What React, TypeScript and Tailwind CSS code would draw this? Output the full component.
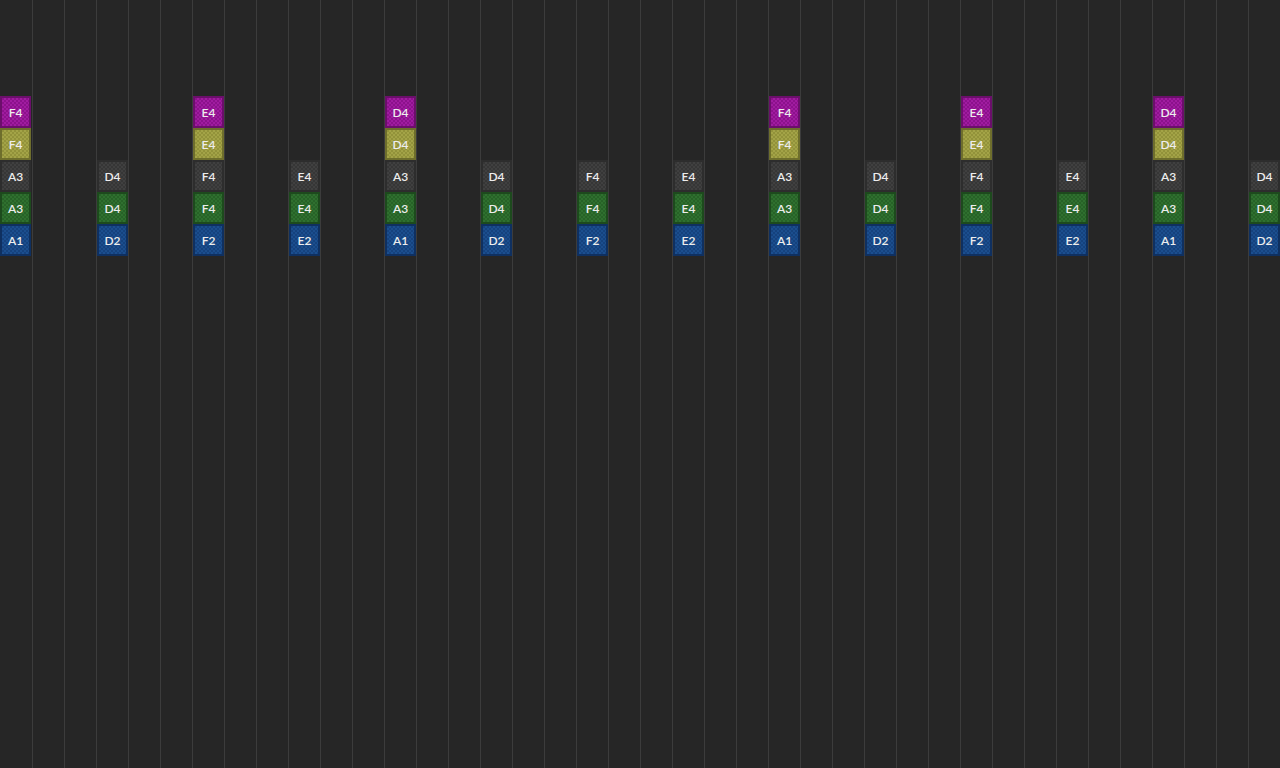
import React from "react";

type Note = { pitch: string; tone: keyof typeof TONES };

const TONES = {
  lead: "border-[#6b0f6b] bg-[repeating-conic-gradient(#a01ca0_0_25%,#8c118c_0_50%)]",
  pad: "border-[#6e6e2c] bg-[repeating-conic-gradient(#a3a347_0_25%,#92923a_0_50%)]",
  mid: "border-[#2d2d2d] bg-[repeating-conic-gradient(#404040_0_25%,#363636_0_50%)]",
  chord: "border-[#1d4a1d] bg-[repeating-conic-gradient(#2f702f_0_25%,#276227_0_50%)]",
  bass: "border-[#0f3060] bg-[repeating-conic-gradient(#1b4e8e_0_25%,#15427e_0_50%)]",
};

// five lanes per step: lead, pad, mid, chord, bass (null = empty lane)
const steps: (string | null)[][] = [
  ["F4", "F4", "A3", "A3", "A1"],
  [null, null, "D4", "D4", "D2"],
  ["E4", "E4", "F4", "F4", "F2"],
  [null, null, "E4", "E4", "E2"],
  ["D4", "D4", "A3", "A3", "A1"],
  [null, null, "D4", "D4", "D2"],
  [null, null, "F4", "F4", "F2"],
  [null, null, "E4", "E4", "E2"],
  ["F4", "F4", "A3", "A3", "A1"],
  [null, null, "D4", "D4", "D2"],
  ["E4", "E4", "F4", "F4", "F2"],
  [null, null, "E4", "E4", "E2"],
  ["D4", "D4", "A3", "A3", "A1"],
  [null, null, "D4", "D4", "D2"],
];

const lanes: Note["tone"][] = ["lead", "pad", "mid", "chord", "bass"];

function Block({ note }: { note: Note }) {
  return (
    <div
      className={`w-[31px] h-8 border-2 bg-size-[4px_4px] flex items-center justify-center pt-px text-[12px] font-semibold text-[#ededed] ${TONES[note.tone]}`}
    >
      {note.pitch}
    </div>
  );
}

export default function App() {
  const cols = Array.from({ length: 40 }, (_, i) => i);
  return (
    <div
      className="w-[1280px] h-[768px] overflow-hidden bg-[#262626] flex"
      style={{ fontFamily: "Lato, 'Noto Sans', sans-serif" }}
    >
      {cols.map((c) => {
        const step = c % 3 === 0 ? steps[c / 3] : undefined;
        return (
          <div
            key={c}
            className={`w-8 h-full shrink-0 flex flex-col pt-24 ${c === 0 ? "" : "border-l border-[#3c3c3c]"}`}
          >
            {step &&
              step.map((p, lane) =>
                p ? (
                  <Block key={lane} note={{ pitch: p, tone: lanes[lane] }} />
                ) : (
                  <div key={lane} className="h-8" />
                )
              )}
          </div>
        );
      })}
    </div>
  );
}
